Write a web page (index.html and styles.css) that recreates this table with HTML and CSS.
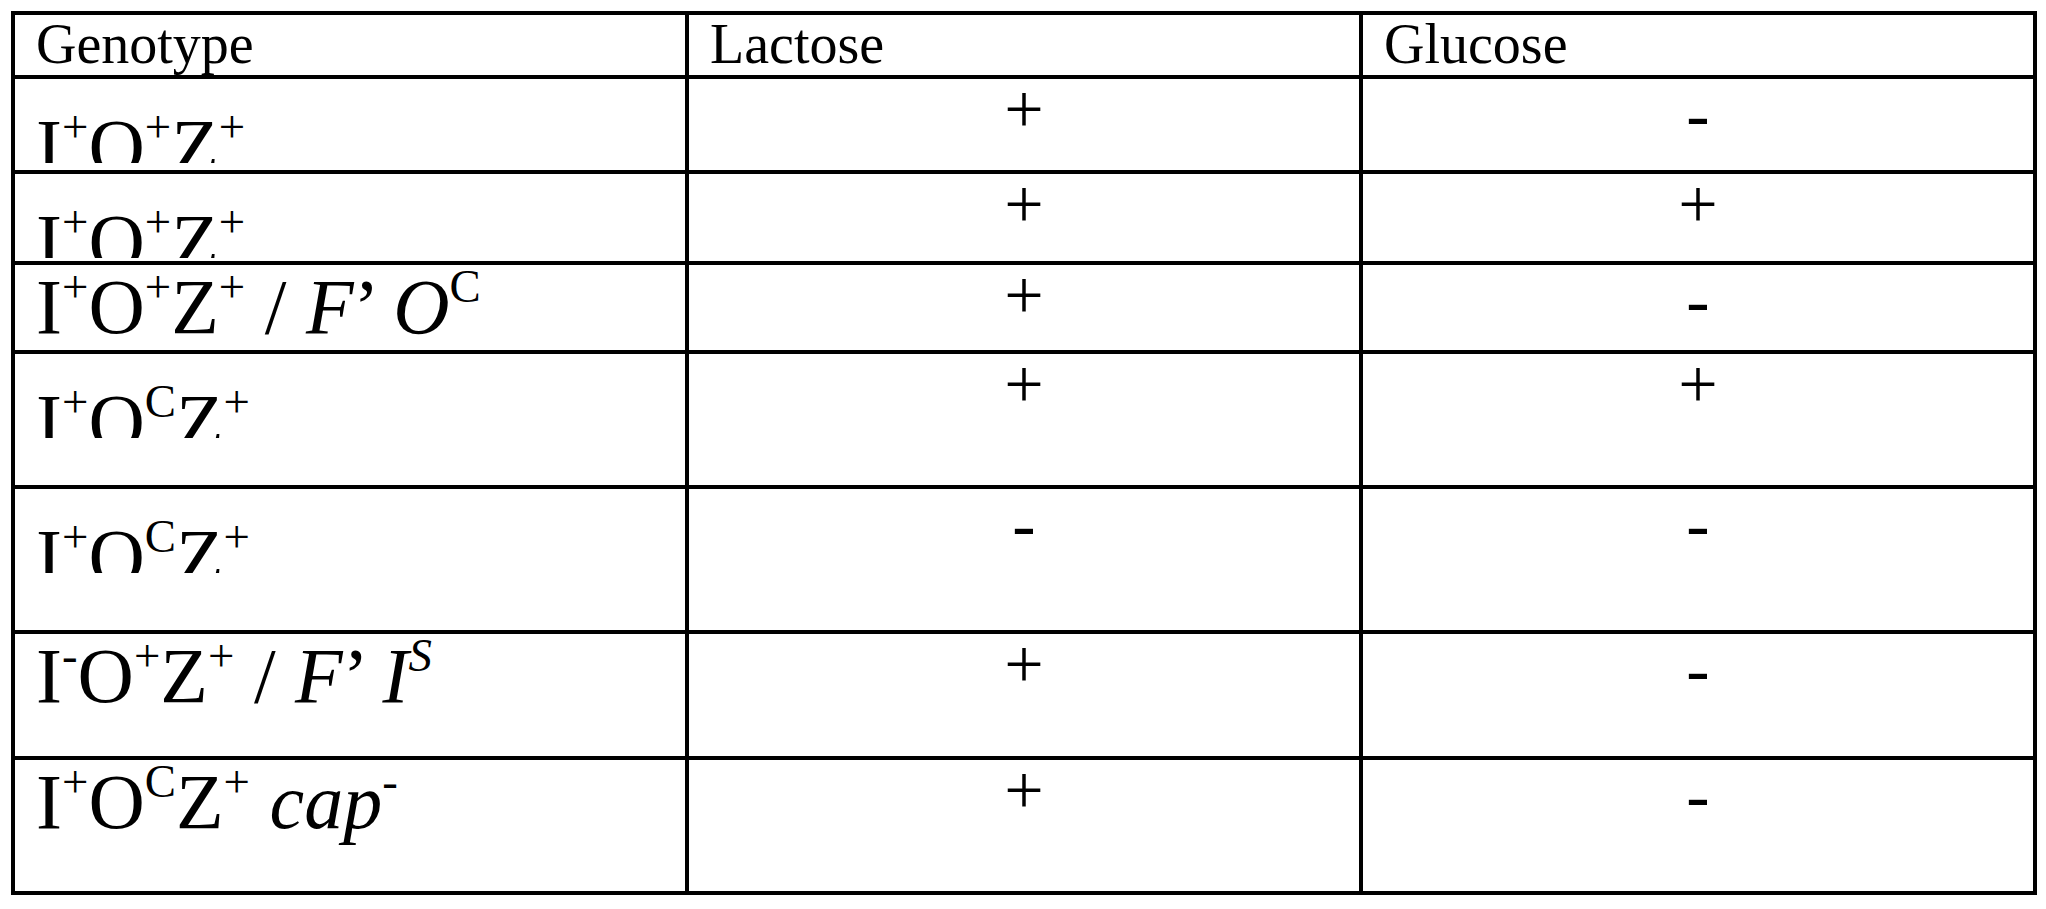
FILE: index.html
```html
<!DOCTYPE html>
<html lang="en">
<head>
<meta charset="utf-8">
<title>Genotype table</title>
<link rel="stylesheet" href="styles.css">
</head>
<body>
<div class="sheet">
  <table class="geno-table">
    <colgroup><col class="col"><col class="col"><col class="col"></colgroup>
    <tr class="h-head">
      <th class="hd">Genotype</th>
      <th class="hd">Lactose</th>
      <th class="hd">Glucose</th>
    </tr>
    <tr class="h-r1">
      <td class="geno"><div class="clip">I<sup>+</sup>O<sup>+</sup>Z<sup>+</sup></div></td>
      <td class="val pos">+</td>
      <td class="val neg">-</td>
    </tr>
    <tr class="h-r2">
      <td class="geno"><div class="clip">I<sup>+</sup>O<sup>+</sup>Z<sup>+</sup></div></td>
      <td class="val pos">+</td>
      <td class="val pos">+</td>
    </tr>
    <tr class="h-r3">
      <td class="geno">I<sup>+</sup>O<sup>+</sup>Z<sup>+</sup> / <i>F</i>’ <i>O</i><sup>C</sup></td>
      <td class="val pos">+</td>
      <td class="val neg">-</td>
    </tr>
    <tr class="h-r4">
      <td class="geno"><div class="clip">I<sup>+</sup>O<sup>C</sup>Z<sup>+</sup></div></td>
      <td class="val pos">+</td>
      <td class="val pos">+</td>
    </tr>
    <tr class="h-r5">
      <td class="geno"><div class="clip">I<sup>+</sup>O<sup>C</sup>Z<sup>+</sup></div></td>
      <td class="val neg">-</td>
      <td class="val neg">-</td>
    </tr>
    <tr class="h-r6">
      <td class="geno">I<sup>-</sup>O<sup>+</sup>Z<sup>+</sup> / <i>F</i>’ <i>I<sup>S</sup></i></td>
      <td class="val pos">+</td>
      <td class="val neg">-</td>
    </tr>
    <tr class="h-r7">
      <td class="geno">I<sup>+</sup>O<sup>C</sup>Z<sup>+</sup> <i>cap</i><sup>-</sup></td>
      <td class="val pos">+</td>
      <td class="val neg">-</td>
    </tr>
  </table>
</div>
</body>
</html>
```

FILE: styles.css
```css
html, body {
  margin: 0;
  padding: 0;
  background: #fff;
}

body {
  font-family: "Liberation Serif", "Times New Roman", serif;
  color: #000;
}

.sheet {
  padding: 11px 0 0 11px;
}

.geno-table {
  border-collapse: collapse;
  table-layout: fixed;
  width: 2023px;
}

.geno-table .col {
  width: 674px;
}

.geno-table th,
.geno-table td {
  border: 4px solid #000;
  vertical-align: top;
  overflow: hidden;
  white-space: nowrap;
}

.hd {
  font-weight: normal;
  text-align: left;
  font-size: 56px;
  line-height: 56px;
  padding: 1px 0 0 21px;
}

.geno {
  font-size: 78px;
  line-height: 78px;
  padding: 3px 0 0 21px;
}

.clip {
  height: 81px;
  overflow: hidden;
  line-height: 130px;
}

.val {
  font-size: 70px;
  line-height: 56px;
  text-align: center;
  padding: 3px 0 0 0;
}

.val.neg {
  padding-top: 8px;
}

sup {
  font-size: 0.6em;
  line-height: 0;
  vertical-align: 0.66em;
  font-style: normal;
}

i sup {
  font-style: italic;
}

.h-head { height: 64px; }
.h-r1 { height: 95px; }
.h-r2 { height: 91px; }
.h-r3 { height: 89px; }
.h-r4 { height: 135px; }
.h-r5 { height: 145px; }
.h-r6 { height: 126px; }
.h-r7 { height: 135px; }
```
